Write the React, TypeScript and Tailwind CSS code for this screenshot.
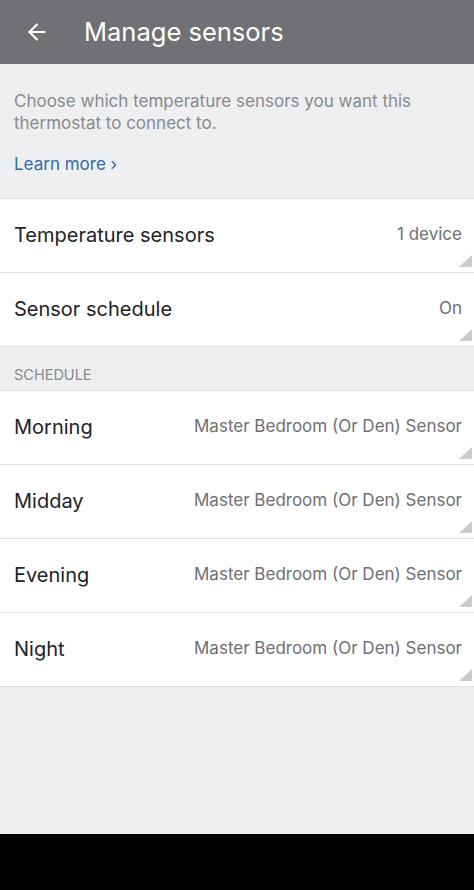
import { ArrowLeft } from 'lucide-react';

type Row = { label: string; value: string };

const settings: Row[] = [
  { label: 'Temperature sensors', value: '1 device' },
  { label: 'Sensor schedule', value: 'On' },
];

const schedule: Row[] = [
  { label: 'Morning', value: 'Master Bedroom (Or Den) Sensor' },
  { label: 'Midday', value: 'Master Bedroom (Or Den) Sensor' },
  { label: 'Evening', value: 'Master Bedroom (Or Den) Sensor' },
  { label: 'Night', value: 'Master Bedroom (Or Den) Sensor' },
];

function ListRow({ row }: { row: Row }) {
  return (
    <div className="relative flex h-[74px] items-center justify-between border-b border-[#dfe0e2] bg-white pl-[14px] pr-[12px]">
      <span className="text-[20px] text-[#222325]">{row.label}</span>
      <span className="text-[17px] text-[#6e7073]">{row.value}</span>
      <svg className="absolute bottom-[5px] right-[2px]" width="13" height="12" viewBox="0 0 13 12">
        <polygon points="13,0 13,12 0,12" fill="#c9cbce" />
      </svg>
    </div>
  );
}

export default function App() {
  return (
    <div className="flex h-[890px] w-[474px] flex-col bg-[#eeeff1] font-['Inter',sans-serif]">
      <header className="flex h-[64px] shrink-0 items-center bg-[#707175] text-white">
        <ArrowLeft className="ml-[24px] h-[26px] w-[26px]" strokeWidth={2} />
        <h1 className="ml-[34px] text-[25.5px] font-normal">Manage sensors</h1>
      </header>

      <div className="border-b border-[#dfe0e2] px-[14px] pt-[26px] pb-[20px]">
        <p className="text-[17px] leading-[22px] text-[#878a8e]">
          Choose which temperature sensors you want this thermostat to connect to.
        </p>
        <a className="mt-[18px] block text-[17px] text-[#2f6bab]">Learn more ›</a>
      </div>

      {settings.map((row) => (
        <ListRow key={row.label} row={row} />
      ))}

      <div className="flex h-[44px] items-end border-b border-[#dfe0e2] px-[14px] pb-[4px]">
        <span className="text-[14.5px] uppercase text-[#878a8e]">Schedule</span>
      </div>

      {schedule.map((row) => (
        <ListRow key={row.label} row={row} />
      ))}

      <div className="flex-1" />
      <div className="h-[56px] shrink-0 bg-black" />
    </div>
  );
}
